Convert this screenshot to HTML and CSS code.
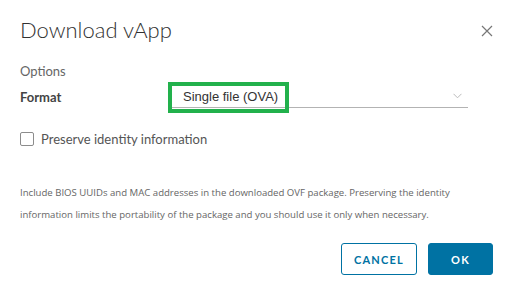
FILE: index.html
```html
<!DOCTYPE html>
<html>
<head>
<meta charset="utf-8">
<link rel="stylesheet" href="styles.css">
</head>
<body>
<div class="modal">
  <div class="header">
    <h1 class="title">Download vApp</h1>
    <svg class="close" width="12" height="12" viewBox="0 0 12 12"><path d="M1 1L11 11M11 1L1 11" stroke="#777" stroke-width="1.2" fill="none"/></svg>
  </div>
  <div class="section-label">Options</div>
  <div class="row">
    <label class="field-label">Format</label>
    <div class="select">
      <span class="select-value">Single file (OVA)</span>
      <svg class="chev" width="9" height="6" viewBox="0 0 9 6"><path d="M0.5 0.8L4.5 4.8L8.5 0.8" stroke="#bbb" stroke-width="1" fill="none"/></svg>
      <div class="highlight"></div>
    </div>
  </div>
  <div class="check-row">
    <span class="checkbox"></span>
    <span class="check-label">Preserve identity information</span>
  </div>
  <p class="help">Include BIOS UUIDs and MAC addresses in the downloaded OVF package. Preserving the identity information limits the portability of the package and you should use it only when necessary.</p>
  <div class="footer">
    <button class="btn btn-outline">CANCEL</button>
    <button class="btn btn-primary">OK</button>
  </div>
</div>
</body>
</html>
```
FILE: styles.css
```css
html, body { margin: 0; padding: 0; background: #fff; }
body { font-family: Lato, "Open Sans", sans-serif; color: #313131; }
.modal { width: 512px; height: 296px; box-sizing: border-box; padding: 0 19px 0 20px; }
.header { display: flex; justify-content: space-between; align-items: center; height: 56px; padding-top: 2px; box-sizing: border-box; }
.title { margin: 0; font-weight: 300; font-size: 22px; color: #313131; letter-spacing: 0; }
.close { margin-right: 0; margin-top: 3px; }
.section-label { font-size: 13px; color: #666; margin-top: 7px; height: 17px; }
.row { display: flex; align-items: center; height: 32px; }
.field-label { font-weight: 700; font-size: 13px; width: 148px; color: #444; margin-top: 2px; }
.select { position: relative; width: 300px; height: 26px; border-bottom: 1px solid #b3b3b3; display: flex; align-items: center; justify-content: space-between; box-sizing: border-box; margin-top: -3px; }
.select-value { font-family: "Liberation Sans", Arial, sans-serif; font-size: 13px; color: #333; padding-left: 15px; padding-top: 5px; }
.chev { margin-right: 6px; margin-top: 4px; }
.highlight { position: absolute; left: 0; top: 0; width: 121px; height: 31px; border: 4px solid #22b14c; box-sizing: border-box; }
.check-row { display: flex; align-items: center; margin-top: 19px; }
.checkbox { width: 12px; height: 12px; border: 1px solid #8c8c8c; border-radius: 2px; margin-right: 7px; }
.check-label { font-size: 13px; color: #555; }
.help { font-family: "Open Sans", sans-serif; font-size: 9.6px; line-height: 22px; color: #666; margin: 35px 0 0 0; width: 470px; }
.footer { display: flex; justify-content: flex-end; gap: 11px; margin-top: 17px; }
.btn { height: 32px; border-radius: 3px; font-family: Lato, sans-serif; font-weight: 700; font-size: 11px; letter-spacing: 1.2px; box-sizing: border-box; }
.btn-outline { width: 76px; background: #fff; border: 1px solid #0072a3; color: #0072a3; }
.btn-primary { width: 65px; background: #0072a3; border: 1px solid #0072a3; color: #fff; }
```
